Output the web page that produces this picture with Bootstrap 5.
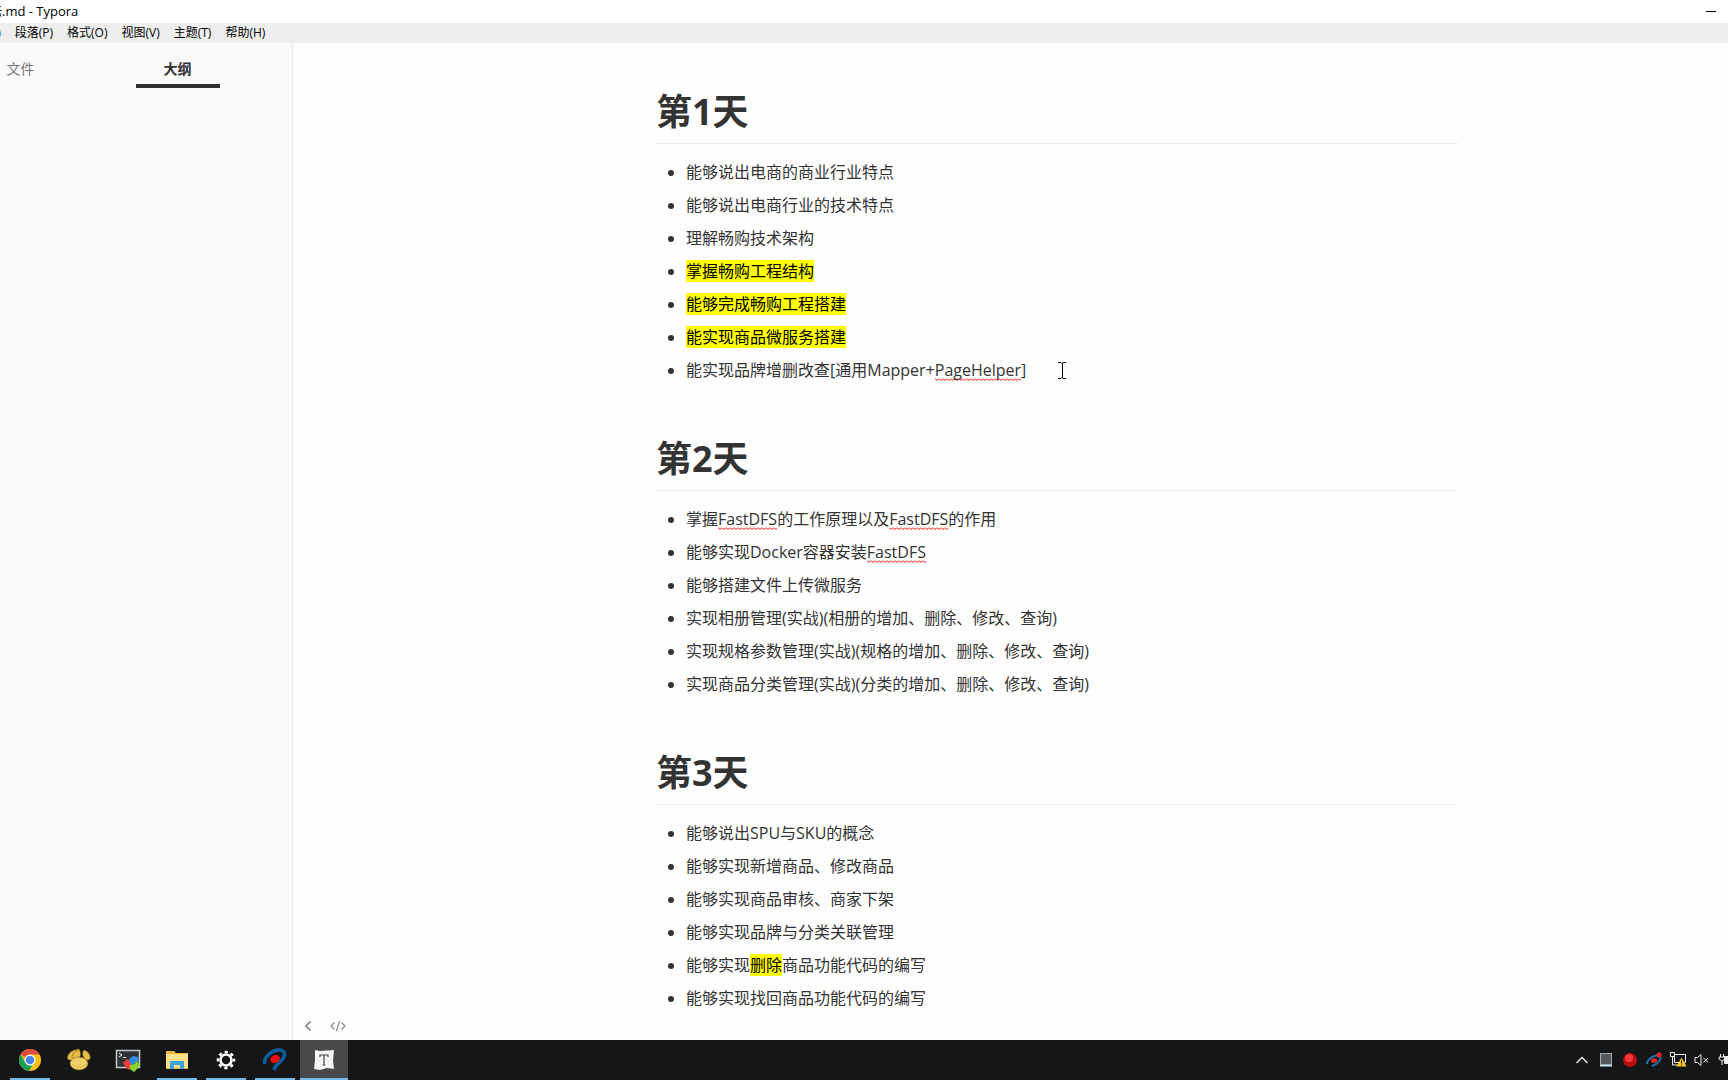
<!DOCTYPE html>
<html lang="zh-CN">
<head>
<meta charset="utf-8">
<meta name="viewport" content="width=device-width, initial-scale=1">
<title>目标.md - Typora</title>
<link href="https://cdn.jsdelivr.net/npm/bootstrap@5.3.0/dist/css/bootstrap.min.css" rel="stylesheet">
<style>
body{font-family:"Open Sans","Noto Sans CJK SC",sans-serif;color:#333;background:#fefefe}
.titlebar{height:23px;color:#000;background:#fff}
.titlebar h2{font-size:13px;line-height:23px;font-weight:400;margin-left:-24px}
.min-btn{width:34px;height:23px;padding-bottom:3px}
.menubar{height:20px;background:#eee;font-size:12px;line-height:20px;gap:14px}
.menubar .first{margin-left:-37px}
.menubar a{color:#000;white-space:nowrap}
.side{width:293px;background:#fafafa;border-right:1px solid #e8e8e8}
.side-tabs{margin-left:-58px}
.side-tabs button{width:157px;font-size:14px;line-height:20px;color:#777}
.side-tabs span{display:inline-block;width:84px;padding:16px 0 5px;border-bottom:4px solid transparent}
.side-tabs .on{color:#333;font-weight:600}
.side-tabs .on span{border-color:#333}
.editor{padding-left:363px}
.page{max-width:802px;padding-top:47px}
.page section{margin-bottom:54px}
.page h1{font-size:36px;line-height:43px;font-weight:700;padding-bottom:10px;margin-bottom:16px;border-bottom:1px solid #eee}
.page ul{padding-left:30px;margin-bottom:0}
.page li{font-size:16px;line-height:25px;margin-bottom:8px}
.page mark{background:#ff0;color:#000;padding:0}
.typo{background:url("data:image/svg+xml,%3Csvg xmlns='http://www.w3.org/2000/svg' width='4' height='3'%3E%3Cpath d='M0 .5 2 2.500 4 .5' fill='none' stroke='red'/%3E%3C/svg%3E") left bottom repeat-x}
.ibeam{left:763px;top:319px}
.status{left:7px;bottom:6px;gap:14px}
.taskbar{height:40px;background:#141618}
.apps{padding-left:6px;gap:1px}
.apps button{width:48px;height:40px}
.apps .run::after{content:"";position:absolute;left:4px;right:4px;bottom:0;height:2px;background:#76b9ed}
.apps .act{background:#47494b}
.apps .act::after{left:0;right:0}
.tray{margin-right:-10px}
.tray button{width:24px;height:40px}
</style>
</head>
<body class="vh-100 overflow-hidden d-flex flex-column">
<header>
<div class="titlebar d-flex justify-content-between overflow-hidden">
<h2 class="mb-0 text-nowrap">目标.md - Typora</h2>
<button class="btn p-0 border-0 rounded-0 min-btn d-flex align-items-center justify-content-center" aria-label="最小化"><svg width="10" height="1"><path d="M0 0h10v1H0z"/></svg></button>
</div>
<nav class="menubar d-flex overflow-hidden">
<a href="#" class="text-decoration-none first">编辑(E)</a><a href="#" class="text-decoration-none">段落(P)</a><a href="#" class="text-decoration-none">格式(O)</a><a href="#" class="text-decoration-none">视图(V)</a><a href="#" class="text-decoration-none">主题(T)</a><a href="#" class="text-decoration-none">帮助(H)</a>
</nav>
</header>
<div class="d-flex flex-grow-1 overflow-hidden">
<aside class="side flex-shrink-0 overflow-hidden">
<div class="side-tabs d-flex">
<button class="btn p-0 border-0 rounded-0 flex-shrink-0"><span>文件</span></button>
<button class="btn p-0 border-0 rounded-0 flex-shrink-0 on"><span>大纲</span></button>
</div>
</aside>
<main class="editor flex-grow-1 position-relative overflow-hidden">
<article class="page">
<section>
<h1>第1天</h1>
<ul>
<li>能够说出电商的商业行业特点</li>
<li>能够说出电商行业的技术特点</li>
<li>理解畅购技术架构</li>
<li><mark>掌握畅购工程结构</mark></li>
<li><mark>能够完成畅购工程搭建</mark></li>
<li><mark>能实现商品微服务搭建</mark></li>
<li>能实现品牌增删改查[通用Mapper+<span class="typo">PageHelper</span>]</li>
</ul>
</section>
<section>
<h1>第2天</h1>
<ul>
<li>掌握<span class="typo">FastDFS</span>的工作原理以及<span class="typo">FastDFS</span>的作用</li>
<li>能够实现Docker容器安装<span class="typo">FastDFS</span></li>
<li>能够搭建文件上传微服务</li>
<li>实现相册管理(实战)(相册的增加、删除、修改、查询)</li>
<li>实现规格参数管理(实战)(规格的增加、删除、修改、查询)</li>
<li>实现商品分类管理(实战)(分类的增加、删除、修改、查询)</li>
</ul>
</section>
<section>
<h1>第3天</h1>
<ul>
<li>能够说出SPU与SKU的概念</li>
<li>能够实现新增商品、修改商品</li>
<li>能够实现商品审核、商家下架</li>
<li>能够实现品牌与分类关联管理</li>
<li>能够实现<mark>删除</mark>商品功能代码的编写</li>
<li>能够实现找回商品功能代码的编写</li>
</ul>
</section>
</article>
<svg class="ibeam position-absolute" width="12" height="17" fill="none" stroke="#000"><path d="M2 .5h3l1 1 1-1h3M6.500 1v15M2 16.500h3l1-1 1 1h3"/></svg>
<div class="status position-absolute d-flex align-items-center">
<button class="btn p-0 border-0 d-flex" aria-label="返回"><svg width="16" height="16" fill="none" stroke="#777" stroke-width="1.500"><path d="M10.500 3.500 6 8l4.500 4.500"/></svg></button>
<button class="btn p-0 border-0 d-flex" aria-label="源代码"><svg width="16" height="16" fill="none" stroke="#888" stroke-width="1.200"><path d="M4.500 4.500 1 8l3.500 3.500M11.500 4.500 15 8l-3.500 3.500M9.500 3l-3 10"/></svg></button>
</div>
</main>
</div>
<footer class="taskbar d-flex justify-content-between flex-shrink-0 overflow-hidden">
<div class="apps d-flex">
<button class="btn p-0 border-0 rounded-0 position-relative d-flex align-items-center justify-content-center run" aria-label="Chrome"><svg width="24" height="24" viewBox="0 0 24 24"><circle cx="12" cy="12" r="11" fill="#fbc116"/><path d="M12 12 2.500 6.500A11 11 0 0 1 21.500 6.500H12z" fill="#dd4b3e"/><path d="M2.500 6.500A11 11 0 0 0 11 23l5-9-4-2-5 2z" fill="#1a9c57"/><circle cx="12" cy="12" r="5.500" fill="#fff"/><circle cx="12" cy="12" r="4.300" fill="#4a86ee"/></svg></button>
<button class="btn p-0 border-0 rounded-0 position-relative d-flex align-items-center justify-content-center" aria-label="Navicat"><svg width="26" height="24" viewBox="0 0 26 24" stroke="#7a5b12" stroke-width=".6"><path d="M1.500 11C1 6 5 2 13 1c2 3 2 7 0 9-4 3-8 3-11.500 1z" fill="#e3bd45"/><path d="M6 10c0-4 3-7 6-8" fill="none"/><path d="M18 2c4 1 7 5 6 9-2 2-5 1-6-1-2-3-2-6 0-8z" fill="#e3bd45"/><ellipse cx="13" cy="15.500" rx="9" ry="6.500" fill="#efd166"/><path d="M6 16c3 4 11 4 14 0" fill="none" stroke="#c79c35"/></svg></button>
<button class="btn p-0 border-0 rounded-0 position-relative d-flex align-items-center justify-content-center" aria-label="终端"><svg width="26" height="26" viewBox="0 0 26 26"><path d="M1.500 3.500h23v17h-23z" fill="#303335" stroke="#c6c9ca" stroke-width="1.500"/><path d="m4 6 3 2-3 2M8 10.500h3" fill="none" stroke="#fff"/><path d="m8 16 4-4 3 2 2 4-2 5-3-1z" fill="#e9403a"/><path d="m14 12 4-3 5 1 1 4-4 2-2 2-3-2z" fill="#2e8ce4"/><path d="m15 18 5-1 1-3 4 3-1 3-5 5-4-3z" fill="#86d52c"/></svg></button>
<button class="btn p-0 border-0 rounded-0 position-relative d-flex align-items-center justify-content-center run" aria-label="文件资源管理器"><svg width="22" height="20" viewBox="0 0 22 20"><path d="M0 1h8l2 2h12v16H0z" fill="#e8b63c"/><path d="M0 4h22v14H0z" fill="#fbe08a"/><path d="M4 11h14v8h-4v-4H8v4H4z" fill="#3ba3dc"/></svg></button>
<button class="btn p-0 border-0 rounded-0 position-relative d-flex align-items-center justify-content-center run" aria-label="设置"><svg width="20" height="20" viewBox="0 0 20 20" fill="none" stroke="#fff"><circle cx="10" cy="10" r="5.500" stroke-width="2.600"/><circle cx="10" cy="10" r="8" stroke-width="2.600" stroke-dasharray="3.140 3.140" stroke-dashoffset="1.570"/></svg></button>
<button class="btn p-0 border-0 rounded-0 position-relative d-flex align-items-center justify-content-center run" aria-label="录屏"><svg width="26" height="26" viewBox="0 0 26 26" fill="none"><path d="M3 17C1 10 11 2 18 3c7 1 5 8 0 12-2 2-5 3-6 8" stroke="#0c5f9e" stroke-width="3.500"/><ellipse cx="13" cy="12" rx="5" ry="3.800" fill="#f30d12" transform="rotate(-25 13 12)"/></svg></button>
<button class="btn p-0 border-0 rounded-0 position-relative d-flex align-items-center justify-content-center run act" aria-label="Typora"><svg width="22" height="22" viewBox="0 0 22 22"><path d="m2 1 5 1 14-1-1 11 1 8-7-1-7 2-6-1 1-9z" fill="#f4f4f4"/><path d="M7 8V6h8v2M11 6v10M9.500 16h3" fill="none" stroke="#444" stroke-width="1.200"/></svg></button>
</div>
<div class="tray d-flex">
<button class="btn p-0 border-0 rounded-0 d-flex align-items-center justify-content-center" aria-label="显示隐藏的图标"><svg width="14" height="14" fill="none" stroke="#eee" stroke-width="1.300"><path d="m1.500 10 5.500-5.500L12.500 10"/></svg></button>
<button class="btn p-0 border-0 rounded-0 d-flex align-items-center justify-content-center" aria-label="键盘"><svg width="12" height="14"><path d="M0 0h12v12H0z" fill="#a5a9ab"/><path d="M1 1h10v10H1z" fill="#55595c"/><path d="M0 12h12v1.500H0z" fill="#bfe6ff"/></svg></button>
<button class="btn p-0 border-0 rounded-0 d-flex align-items-center justify-content-center" aria-label="录制"><svg width="14" height="14"><circle cx="7" cy="7" r="7" fill="#b90e10"/><circle cx="6" cy="5" r="4" fill="#f0383a"/></svg></button>
<button class="btn p-0 border-0 rounded-0 d-flex align-items-center justify-content-center" aria-label="录屏工具"><svg width="16" height="16" fill="none"><path d="M1 12C1 7 9 2 13 4s-1 8-7 10" stroke="#1f75b3" stroke-width="2"/><ellipse cx="8" cy="8.500" rx="3" ry="2.300" fill="#e22"/><circle cx="13" cy="3" r="2.500" fill="#f22"/></svg></button>
<button class="btn p-0 border-0 rounded-0 d-flex align-items-center justify-content-center" aria-label="网络"><svg width="17" height="16" fill="none" stroke="#eee"><path d="M4.500 2.500h11v8h-11zM2.500 5v8h6M.5.5h4v4h-4z"/><path d="m11.500 5.500 5 9h-10z" fill="#ffc81e" stroke="none"/><path d="M11.500 8.500v3m0 1v1" stroke="#000"/></svg></button>
<button class="btn p-0 border-0 rounded-0 d-flex align-items-center justify-content-center" aria-label="静音"><svg width="16" height="14" fill="none" stroke="#eee"><path d="M1 4.500h2.500L7 1.500v11l-3.500-3H1zM9.500 5l4.500 4.500m0-4.500L9.500 9.500"/></svg></button>
<button class="btn p-0 border-0 rounded-0 d-flex align-items-center justify-content-center" aria-label="电源"><svg width="16" height="14" fill="none" stroke="#eee"><path d="M6.500 3.500h10v7h-10z" fill="#eee"/><path d="M2.500 1v3m3-3v3M1 4h6v2L4 8 1 6zM4 8v4"/></svg></button>
</div>
</footer>
<script src="https://cdn.jsdelivr.net/npm/bootstrap@5.3.0/dist/js/bootstrap.bundle.min.js"></script>
</body>
</html>
